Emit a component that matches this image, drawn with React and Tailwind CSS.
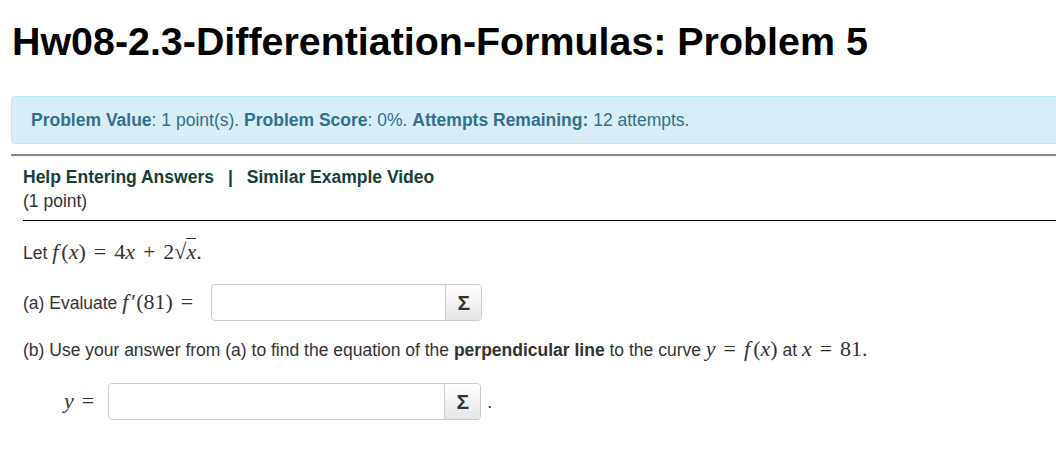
import React from "react";

const M = ({ children, f }) => (
  <span className={`font-['Liberation_Serif',serif] text-[22px] italic leading-[20px] ${f ? "pr-[3px]" : ""}`}>
    {children}
  </span>
);
const N = ({ children }) => (
  <span className="font-['Liberation_Serif',serif] text-[22px] leading-[20px]">{children}</span>
);
const Op = ({ children }) => (
  <span className="mx-[8px] font-['Liberation_Serif',serif] text-[22px] leading-[20px]">{children}</span>
);

const AnswerBox = ({ width }) => (
  <div className={`flex h-[37px] ${width} rounded-[4px] border border-[#cccccc] bg-white`}>
    <input className="min-w-0 flex-1 rounded-l-[4px] px-2 outline-none" />
    <button className="flex w-[36px] items-center justify-center rounded-r-[4px] border-l border-[#cccccc] bg-gradient-to-b from-white to-[#e6e6e6] font-['Liberation_Sans',sans-serif] text-[21px] font-bold text-[#333]">
      Σ
    </button>
  </div>
);

export default function App() {
  return (
    <div className="min-h-screen overflow-hidden bg-white font-['Liberation_Sans',Arial,sans-serif] text-[#333]">
      <h1 className="pl-[12px] pt-[19px] text-[39.4px] font-bold leading-[44px] text-black">
        Hw08-2.3-Differentiation-Formulas: Problem 5
      </h1>

      <div className="ml-[11px] mt-[33px] w-[1100px]">
        <div className="rounded-[4px] border border-[#bce8f1] bg-[#d9edf7] px-[19px] py-[12px] text-[17.5px] leading-[22px] text-[#31708f]">
          <b>Problem Value</b>: 1 point(s). <b>Problem Score</b>: 0%. <b>Attempts Remaining:</b> 12 attempts.
        </div>

        <div className="mt-[10px] border-t-2 border-[#888888] shadow-[0_2px_3px_rgba(0,0,0,0.06)]" />

        <div className="pl-[12px] pt-[9px] text-[17.5px] leading-[24px]">
          <div className="font-bold text-[#163f3b]">
            Help Entering Answers<span className="px-[14px]">|</span>Similar Example Video
          </div>
          <div>(1 point)</div>
          <div className="mt-[7px] border-t border-black" />

          <div className="pt-[20px]">
            Let <M f>f</M><N>(</N><M>x</M><N>)</N><Op>=</Op><N>4</N><M>x</M><Op>+</Op><N>2</N>
            <N>√</N>
            <span className="border-t border-[#333] font-['Liberation_Serif',serif] text-[22px] italic leading-[20px]">x</span>
            <N>.</N>
          </div>

          <div className="mt-[19px] flex items-center gap-[10px]">
            <span>
              (a) Evaluate <M f>f</M><N>′(81)</N><Op>=</Op>
            </span>
            <AnswerBox width="w-[271px]" />
          </div>

          <div className="mt-[17px]">
            (b) Use your answer from (a) to find the equation of the <b>perpendicular line</b> to the curve{" "}
            <M>y</M><Op>=</Op><M f>f</M><N>(</N><M>x</M><N>)</N> at <M>x</M><Op>=</Op><N>81.</N>
          </div>

          <div className="mt-[21px] flex items-center gap-[6px] pl-[41px]">
            <span>
              <M>y</M><Op>=</Op>
            </span>
            <AnswerBox width="w-[373px]" />
            <span>.</span>
          </div>
        </div>
      </div>
    </div>
  );
}
